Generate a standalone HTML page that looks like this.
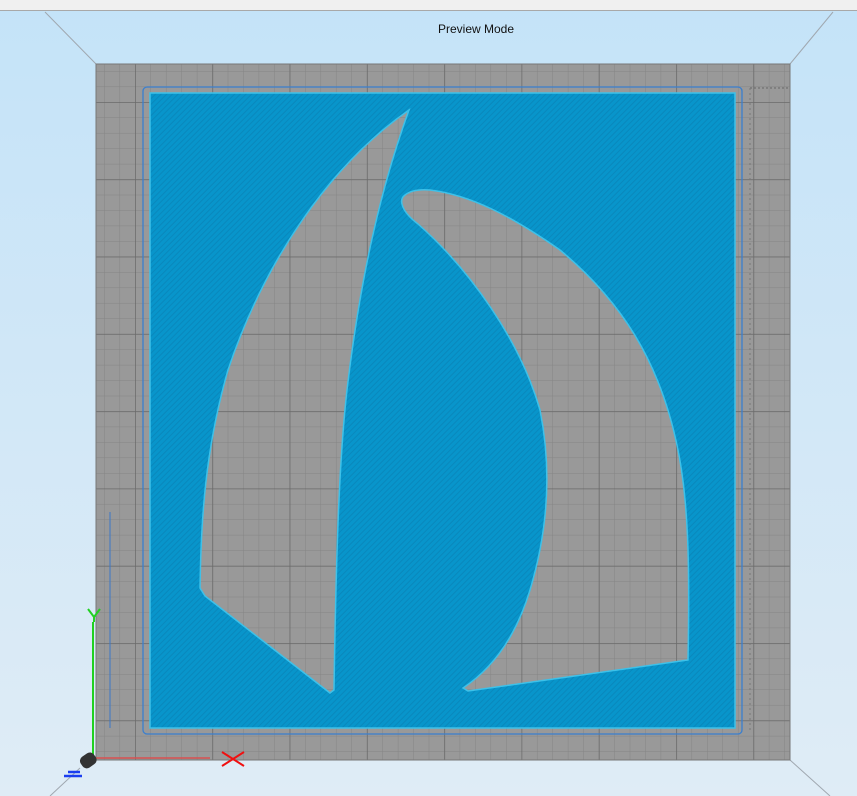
<!DOCTYPE html>
<html><head><meta charset="utf-8"><style>
html,body{margin:0;padding:0;width:857px;height:796px;overflow:hidden}
body{background:linear-gradient(#c4e3f8,#dfecf6);font-family:"Liberation Sans",sans-serif}
.top{position:absolute;left:0;top:0;width:857px;height:10px;background:#f0f0f0;border-bottom:1px solid #a8a8a8}
.title{position:absolute;top:22px;left:0;width:857px;text-align:center;font-size:12px;color:#111;padding-left:95px;box-sizing:border-box}
svg{position:absolute;left:0;top:0}
</style></head><body>
<div class="top"></div>
<svg width="857" height="796" viewBox="0 0 857 796">
<defs>
<pattern id="minor" x="135" y="102" width="15.46" height="15.46" patternUnits="userSpaceOnUse">
<path d="M0 0V15.46M0 0H15.46" stroke="#858585" stroke-width="1" fill="none"/>
</pattern>
<pattern id="major" x="135" y="102" width="77.3" height="77.3" patternUnits="userSpaceOnUse">
<path d="M0 0V77.3M0 0H77.3" stroke="#6a6a6a" stroke-width="1.5" fill="none"/>
</pattern>
<pattern id="hatch" width="4" height="4" patternUnits="userSpaceOnUse" patternTransform="rotate(45)">
<rect width="4" height="4" fill="#0895cb"/><rect width="1" height="4" fill="#0a7fb3" opacity=".6"/>
</pattern>
</defs>
<line x1="45" y1="12" x2="96" y2="64" stroke="#a0a8b0"/>
<line x1="833" y1="12" x2="790" y2="64" stroke="#a0a8b0"/>
<line x1="790" y1="760" x2="830" y2="796" stroke="#a0a8b0"/>
<line x1="80" y1="768" x2="50" y2="796" stroke="#a0a8b0"/>
<rect x="96" y="64" width="694" height="696" fill="#999"/>
<rect x="96" y="64" width="694" height="696" fill="url(#minor)"/>
<rect x="96" y="64" width="694" height="696" fill="url(#major)"/>
<rect x="96" y="64" width="694" height="696" fill="none" stroke="#777" stroke-width="1"/>
<line x1="750" y1="88" x2="790" y2="88" stroke="#666" stroke-dasharray="2 2"/>
<line x1="750" y1="88" x2="750" y2="730" stroke="#777" stroke-dasharray="2 3"/>
<line x1="110" y1="512" x2="110" y2="728" stroke="#3a78c8"/>
<rect x="143" y="87" width="599" height="647" rx="4" fill="none" stroke="#3a7fcf" stroke-width="1.3"/>
<path fill="url(#hatch)" stroke="#3dc1e9" stroke-width="1.5" fill-rule="evenodd" d="M150 93H735V728H150Z
M409 110 C330 165 265 260 228 370 C205 450 201 520 200 588 L205 596 L330 693 L334 690 C336 560 339 460 347 390 C360 280 380 190 409 110Z
M405 195 C398 200 402 212 418 224 C470 270 520 340 540 410 C552 470 548 530 530 590 C515 640 490 670 463 688 L468 691 L688 660 C690 560 688 500 678 450 C660 360 620 300 560 250 C510 215 470 195 430 190 C418 189 410 191 405 195Z"/>
<line x1="93" y1="622" x2="93" y2="757" stroke="#20d020" stroke-width="2"/>
<path d="M88 609 L94 617 L100 609 M94 617V622" stroke="#22d022" stroke-width="2" fill="none"/>
<line x1="96" y1="758" x2="210" y2="758" stroke="#d85050" stroke-width="1.5"/>
<path d="M222 752 L244 766 M244 752 L222 766" stroke="#f01010" stroke-width="2"/>
<rect x="80" y="754" width="16" height="13" rx="5" fill="#333" transform="rotate(-35 88 760)"/>
<path d="M64 776 H82 M68 772 H80" stroke="#1a3ef0" stroke-width="2.5"/>
</svg>
<div class="title">Preview Mode</div>
</body></html>
